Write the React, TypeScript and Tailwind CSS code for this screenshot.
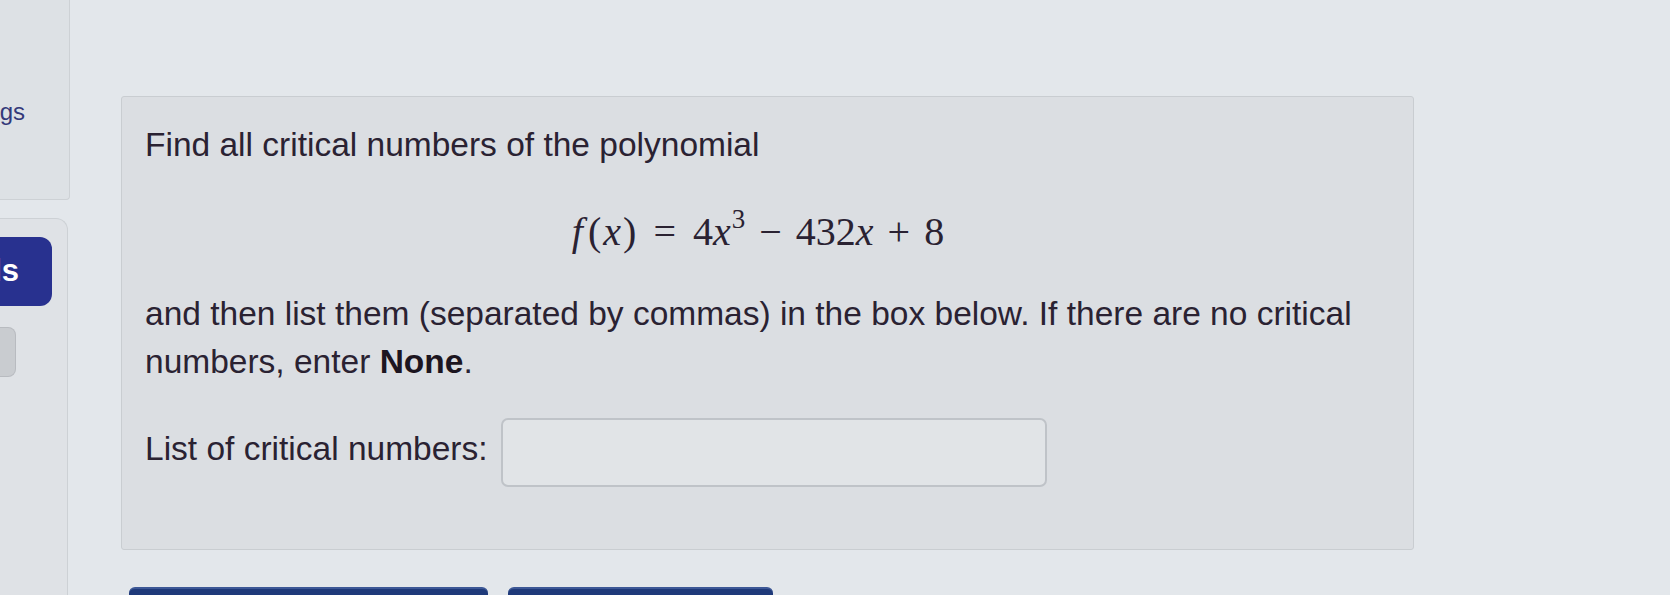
import React from 'react'

const textFont = "font-['Liberation_Sans','Helvetica_Neue',Arial,sans-serif]"
const mathFont = "font-['Liberation_Serif','Times_New_Roman',serif]"

const Formula: React.FC = () => (
  <div className={`flex justify-center items-baseline pr-[18px] text-[40px] leading-[48px] text-[#2a2232] ${mathFont}`}>
    <span className="italic">f</span>
    <span className="ml-[5px]">(</span>
    <span className="italic ml-[2px]">x</span>
    <span className="ml-[2px]">)</span>
    <span className="mx-[17px]">=</span>
    <span>4</span>
    <span className="italic">x</span>
    <span className="text-[27px] relative -top-[17px] ml-[1px]">3</span>
    <span className="mx-[14px]">−</span>
    <span>432</span>
    <span className="italic">x</span>
    <span className="mx-[14px]">+</span>
    <span>8</span>
  </div>
)

const Sidebar: React.FC = () => (
  <aside className="w-[70px] shrink-0 flex flex-col">
    <div className="h-[200px] bg-[#dde1e5] border-r border-b border-[#cdd1d5] rounded-br-[4px] pt-[98px]">
      <div className="w-[25px] flex justify-end whitespace-nowrap text-[24px] leading-[28px] text-[#34397a]">
        Settings
      </div>
    </div>
    <div className="mt-[18px] flex-1 w-[68px] bg-[#dfe2e6] border-r border-t border-[#cdd1d5] rounded-tr-[12px] pt-[18px]">
      <div className="h-[69px] w-[52px] bg-[#28318f] rounded-r-[12px] flex items-center justify-end pr-[33px] overflow-hidden">
        <span className="whitespace-nowrap text-[31px] font-bold text-white">Tools</span>
      </div>
      <div className="mt-[21px] h-[50px] w-[16px] bg-[#c9ccd0] border border-l-0 border-[#b8bbc0] rounded-r-[8px]" />
    </div>
  </aside>
)

export default function App() {
  return (
    <div className={`w-[1670px] h-[595px] overflow-hidden bg-[#e3e7eb] flex ${textFont}`}>
      <Sidebar />
      <main className="flex-1 pl-[51px] pt-[96px]">
        <section className="w-[1293px] h-[454px] bg-[#dbdee2] border border-[#c9cdd1] rounded-[3px] pl-[23px] pr-[24px] pt-[24px] text-[33.5px] leading-[48px] text-[#2a2232]">
          <p>Find all critical numbers of the polynomial</p>
          <div className="mt-[39px] mb-[30px]">
            <Formula />
          </div>
          <p>
            and then list them (separated by commas) in the box below. If there are no critical
            numbers, enter <span className="font-bold text-[#1c1520]">None</span>.
          </p>
          <div className="mt-[32px] flex items-center">
            <label className="mb-[8px] whitespace-nowrap">List of critical numbers:</label>
            <div className="ml-[13px] w-[546px] h-[69px] bg-[#e1e4e7] border-2 border-[#bfc3c8] rounded-[7px]" />
          </div>
        </section>
        <div className="mt-[37px] ml-[8px] flex gap-[20px]">
          <div className="w-[359px] h-[40px] bg-[#1f3a7a] border-t-2 border-[#3d5896] rounded-t-[6px]" />
          <div className="w-[265px] h-[40px] bg-[#1f3a7a] border-t-2 border-[#3d5896] rounded-t-[6px]" />
        </div>
      </main>
    </div>
  )
}
